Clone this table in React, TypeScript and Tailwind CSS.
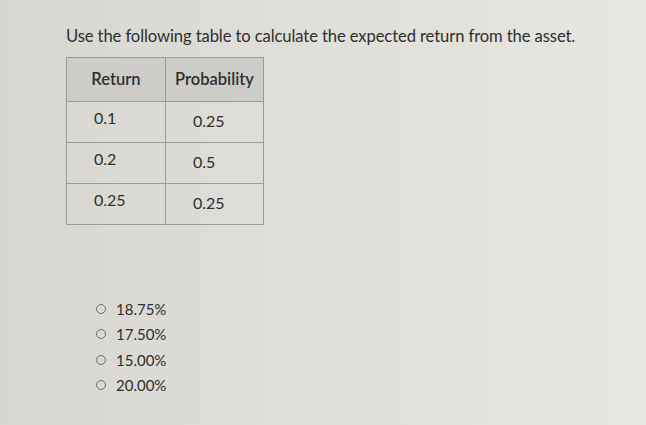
const rows = [
  { ret: "0.1", prob: "0.25" },
  { ret: "0.2", prob: "0.5" },
  { ret: "0.25", prob: "0.25" },
];

const options = ["18.75%", "17.50%", "15.00%", "20.00%"];

export default function App() {
  return (
    <div className="h-[425px] w-[646px] overflow-hidden bg-gradient-to-r from-[#d7d6d1] via-[#e0dfda] to-[#e7e6e1] font-['Lato',sans-serif] text-[#2f2f2d]">
      <div className="pl-[66px] pt-[24px]">
        <p className="text-[16.6px] leading-6 tracking-[-0.1px]">
          Use the following table to calculate the expected return from the asset.
        </p>

        <table className="mt-[9px] border-collapse border border-[#9c9b97]">
          <thead>
            <tr className="h-[44px] bg-[#cdccc8]">
              <th className="w-[99px] border border-[#9c9b97] text-center text-[16.5px] font-semibold">Return</th>
              <th className="w-[98px] border border-[#9c9b97] text-center text-[16.5px] font-semibold">Probability</th>
            </tr>
          </thead>
          <tbody className="text-[16px]">
            {rows.map((r) => (
              <tr key={r.ret} className="h-[41px]">
                <td className="border border-[#9c9b97] pl-[27px] pb-[8px] text-left">{r.ret}</td>
                <td className="border border-[#9c9b97] pl-[27px] pb-[2px] text-left">{r.prob}</td>
              </tr>
            ))}
          </tbody>
        </table>

        <div className="mt-[73px] flex flex-col gap-[4px] pl-[30px]">
          {options.map((o) => (
            <label key={o} className="flex h-[21.5px] items-center gap-[10px] text-[15px]">
              <span className="h-[10px] w-[10px] rounded-full border border-[#6f6e6a]" />
              <span>{o}</span>
            </label>
          ))}
        </div>
      </div>
    </div>
  );
}
